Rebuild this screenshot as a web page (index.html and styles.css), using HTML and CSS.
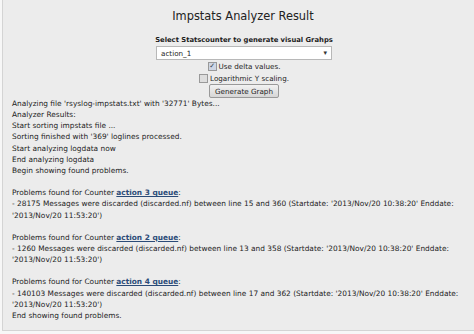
FILE: index.html
```html
<!DOCTYPE html>
<html>
<head>
<meta charset="utf-8">
<link rel="stylesheet" href="styles.css">
</head>
<body>
<div class="panel">
  <h1 class="title">Impstats Analyzer Result</h1>
  <form class="form">
    <div class="label">Select Statscounter to generate visual Grahps</div>
    <div class="select"><span>action_1</span><span class="arrow">▾</span></div>
    <label class="check first"><span class="box checked">✓</span>Use delta values.</label>
    <label class="check second"><span class="box"></span>Logarithmic Y scaling.</label>
    <div class="button">Generate Graph</div>
  </form>
  <div class="log">
    <div>Analyzing file 'rsyslog-impstats.txt' with '32771' Bytes...</div>
    <div>Analyzer Results:</div>
    <div>Start sorting impstats file ...</div>
    <div>Sorting finished with '369' loglines processed.</div>
    <div>Start analyzing logdata now</div>
    <div>End analyzing logdata</div>
    <div>Begin showing found problems.</div>
    <div class="gap"></div>
    <div>Problems found for Counter <a class="link">action 3 queue</a>:</div>
    <div>- 28175 Messages were discarded (discarded.nf) between line 15 and 360 (Startdate: '2013/Nov/20 10:38:20' Enddate: '2013/Nov/20 11:53:20')</div>
    <div class="gap"></div>
    <div>Problems found for Counter <a class="link">action 2 queue</a>:</div>
    <div>- 1260 Messages were discarded (discarded.nf) between line 13 and 358 (Startdate: '2013/Nov/20 10:38:20' Enddate: '2013/Nov/20 11:53:20')</div>
    <div class="gap"></div>
    <div>Problems found for Counter <a class="link">action 4 queue</a>:</div>
    <div>- 140103 Messages were discarded (discarded.nf) between line 17 and 362 (Startdate: '2013/Nov/20 10:38:20' Enddate: '2013/Nov/20 11:53:20')</div>
    <div>End showing found problems.</div>
  </div>
</div>
</body>
</html>
```
FILE: styles.css
```css
html, body {
  margin: 0;
  padding: 0;
  background: #f7f7f7;
}
body {
  width: 474px;
  height: 334px;
  overflow: hidden;
  font-family: "DejaVu Sans", Verdana, sans-serif;
  color: #1c1c1c;
}
.panel {
  margin: 0 0 0 2px;
  height: 331px;
  box-sizing: border-box;
  background: #ececec;
  border-left: 1px solid #d4d4d4;
  border-bottom: 1px solid #d4d4d4;
  padding: 7px 6px 0 9px;
}
.title {
  margin: 0;
  text-align: center;
  font-size: 11.4px;
  font-weight: normal;
  line-height: 18px;
  color: #222;
  padding-left: 6px;
}
.form {
  display: flex;
  flex-direction: column;
  align-items: center;
  margin-top: 10px;
  font-size: 7.2px;
  padding-left: 8px;
}
.label {
  font-weight: bold;
  font-size: 6.8px;
  line-height: 10px;
}
.select {
  width: 176px;
  height: 14px;
  box-sizing: border-box;
  background: #fff;
  border: 1px solid #b8b8b8;
  display: flex;
  align-items: center;
  justify-content: space-between;
  padding: 0 4px;
  margin-top: 1px;
}
.arrow { font-size: 7px; color: #333; }
.check {
  display: flex;
  align-items: center;
  gap: 2px;
  height: 10px;
}
.check.first { margin-top: 1px; }
.check.second { margin-top: 2px; }
.box {
  width: 7px;
  height: 7px;
  border: 1px solid #999;
  background: #ddd;
  font-size: 7px;
  line-height: 7px;
  text-align: center;
  color: #345;
}
.box.checked { background: #cfd6e4; }
.button {
  margin-top: 1px;
  width: 70px;
  height: 14px;
  box-sizing: border-box;
  border: 1px solid #999;
  border-radius: 2px;
  background: linear-gradient(#f2f2f2, #d6d6d6);
  display: flex;
  align-items: center;
  justify-content: center;
}
.log {
  margin-top: 0;
  font-size: 7.4px;
  line-height: 11.15px;
}
.gap { height: 11.15px; }
.link {
  color: #2b4b78;
  font-weight: bold;
  text-decoration: underline;
}
```
